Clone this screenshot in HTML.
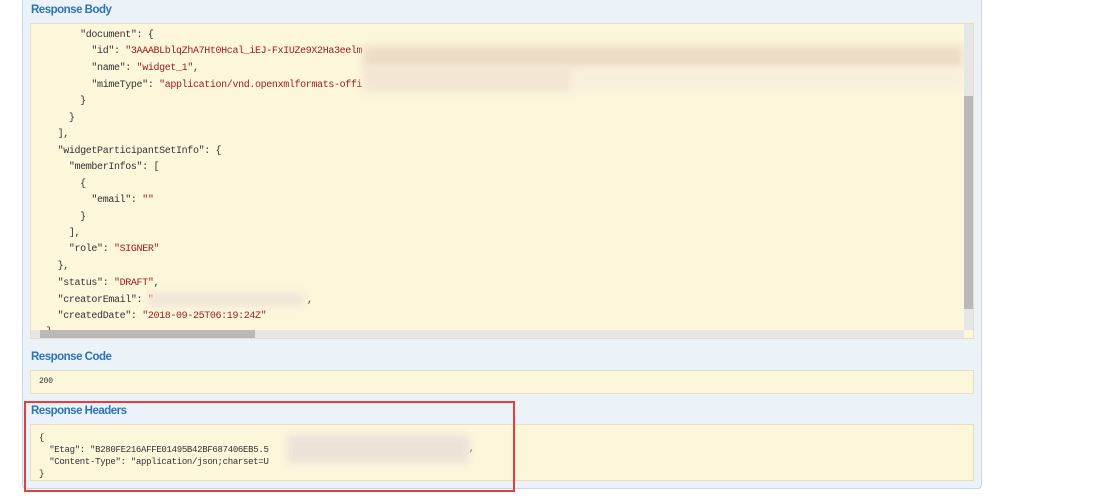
<!DOCTYPE html>
<html><head><meta charset="utf-8"><style>
*{margin:0;padding:0;box-sizing:border-box}
body{width:1111px;height:503px;background:#fff;position:relative;overflow:hidden;font-family:"Liberation Sans",sans-serif}
.panel{position:absolute;left:22px;top:-4px;width:960px;height:493px;background:#ebf3f9;border:1px solid #c5d9e8;border-top:none;border-radius:0 0 4px 4px}
.t{position:absolute;left:31px;color:#2a74b8;font-size:11.5px;font-weight:bold;letter-spacing:-0.5px}
.box{position:absolute;left:30px;width:944px;background:#fcf6db;border:1px solid #e5e0c2}
.code{position:absolute;font-family:"Liberation Mono",monospace;font-size:10px;letter-spacing:-0.36px;color:#333;white-space:pre}
.l{position:absolute;left:34px;line-height:12px}
.s{color:#9c1b1b}
.blur{position:absolute;background:#eee0cc;filter:blur(4px)}
</style></head><body>
<div class="panel"></div>
<div class="t" style="top:4px">Response Body</div>
<div class="box" style="top:23px;height:316px;overflow:hidden">
 <div class="code" style="left:-30px;top:-23px;width:1000px;height:330px">
<div class="l" style="top:29px">        "document": {</div>
<div class="l" style="top:45px">          "id": <span class="s">"3AAABLblqZhA7Ht0Hcal_iEJ-FxIUZe9X2Ha3eelm</span></div>
<div class="l" style="top:62px">          "name": <span class="s">"widget_1"</span>,</div>
<div class="l" style="top:79px">          "mimeType": <span class="s">"application/vnd.openxmlformats-offi</span></div>
<div class="l" style="top:95px">        }</div>
<div class="l" style="top:112px">      }</div>
<div class="l" style="top:128px">    ],</div>
<div class="l" style="top:145px">    "widgetParticipantSetInfo": {</div>
<div class="l" style="top:161px">      "memberInfos": [</div>
<div class="l" style="top:178px">        {</div>
<div class="l" style="top:194px">          "email": <span class="s">""</span></div>
<div class="l" style="top:211px">        }</div>
<div class="l" style="top:227px">      ],</div>
<div class="l" style="top:243px">      "role": <span class="s">"SIGNER"</span></div>
<div class="l" style="top:260px">    },</div>
<div class="l" style="top:277px">    "status": <span class="s">"DRAFT"</span>,</div>
<div class="l" style="top:294px">    "creatorEmail": <span class="s">"</span></div>
<div class="l" style="top:294px;left:306px">,</div>
<div class="l" style="top:310px">    "createdDate": <span class="s">"2018-09-25T06:19:24Z"</span></div>
<div class="l" style="top:326px">  }</div>
 </div>
 <div class="blur" style="left:332px;top:22px;width:600px;height:22px;background:#ecdcc6"></div>
 <div class="blur" style="left:332px;top:42px;width:210px;height:26px;background:#f3e6d2"></div>
 <div class="blur" style="left:542px;top:44px;width:390px;height:22px;background:#f8efd9"></div>
 <div class="blur" style="left:118px;top:269px;width:154px;height:13px;background:#f0e4d8"></div>
 <div style="position:absolute;left:933px;top:0;width:10px;height:306px;background:#e6e6e6"></div>
 <div style="position:absolute;left:933px;top:72px;width:10px;height:213px;background:#b9b9b9"></div>
 <div style="position:absolute;left:0;top:306px;width:933px;height:9px;background:#e6e6e6"></div>
 <div style="position:absolute;left:9px;top:306px;width:215px;height:9px;background:#b9b9b9"></div>
</div>
<div class="t" style="top:351px">Response Code</div>
<div class="box" style="top:370px;height:24px"><div class="code" style="left:8px;top:6px;font-size:8px;letter-spacing:-0.2px">200</div></div>
<div class="t" style="top:405px">Response Headers</div>
<div class="box" style="top:424px;height:57px">
 <div class="code" style="left:8px;top:7px;font-size:9px;letter-spacing:-0.3px;line-height:12px">{
  "Etag": "B280FE216AFFE01495B42BF687406EB5.5
  "Content-Type": "application/json;charset=U
}</div>
 <div class="code" style="left:438px;top:19px;font-size:9px">,</div>
 <div class="blur" style="left:256px;top:10px;width:182px;height:28px;background:#ebe3d8"></div>
</div>
<div style="position:absolute;left:24px;top:401px;width:491px;height:91px;border:2px solid #e53e3e"></div>
</body></html>
